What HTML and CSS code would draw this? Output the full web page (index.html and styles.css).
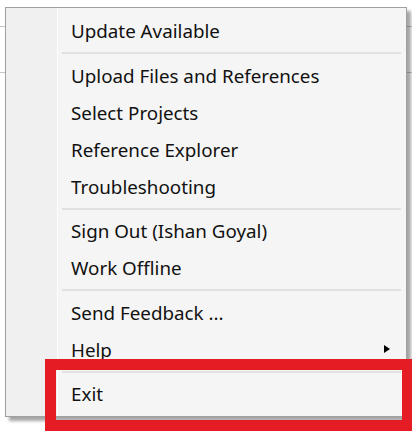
FILE: index.html
```html
<!DOCTYPE html>
<html>
<head>
<meta charset="utf-8">
<link rel="stylesheet" href="styles.css">
</head>
<body>
<div class="page">
  <div class="bg-line first"></div>
  <div class="bg-line second"></div>

  <div class="menu">
    <div class="item">Update Available</div>
    <div class="sep"></div>
    <div class="item">Upload Files and References</div>
    <div class="item">Select Projects</div>
    <div class="item">Reference Explorer</div>
    <div class="item">Troubleshooting</div>
    <div class="sep"></div>
    <div class="item">Sign Out (Ishan Goyal)</div>
    <div class="item">Work Offline</div>
    <div class="sep"></div>
    <div class="item">Send Feedback ...</div>
    <div class="item has-sub">Help<span class="arrow"></span></div>
    <div class="sep"></div>
    <div class="item">Exit</div>
  </div>

  <div class="highlight"></div>
</div>
</body>
</html>
```
FILE: styles.css
```css
html, body {
  margin: 0;
  padding: 0;
  background: #ffffff;
}
.page {
  position: relative;
  width: 412px;
  height: 431px;
  overflow: hidden;
  background: #ffffff;
}
.bg-line {
  height: 1px;
  background: #c6c6c6;
}
.bg-line.first { margin-top: 26px; }
.bg-line.second { margin-top: 45px; }

.menu {
  position: absolute;
  left: 5px;
  top: 7px;
  width: 400px;
  border: 1px solid #a0a0a0;
  padding: 4px 0 3.5px 0;
  background: linear-gradient(to right, #f0f0f0 0, #f0f0f0 51px, #fdfdfd 51px, #fdfdfd 52px, #f5f5f5 52px);
  box-shadow: 4px 4px 3px rgba(0, 0, 0, 0.35);
  font-family: "Noto Sans", "Open Sans", sans-serif;
  font-size: 18.8px;
  color: #111111;
}
.item {
  position: relative;
  height: 37px;
  line-height: 39px;
  padding-left: 65px;
  white-space: nowrap;
}
.sep {
  height: 2px;
  margin: 3px 5px 2.5px 56px;
  background: #e1e1e1;
}
.arrow {
  position: absolute;
  right: 16px;
  top: 14px;
  width: 0;
  height: 0;
  border-top: 4.5px solid transparent;
  border-bottom: 4.5px solid transparent;
  border-left: 6px solid #000;
}
.highlight {
  position: absolute;
  left: 45px;
  top: 359px;
  width: 367px;
  height: 72px;
  box-sizing: border-box;
  border: 11px solid #e61c24;
  border-right-width: 10px;
}
```
